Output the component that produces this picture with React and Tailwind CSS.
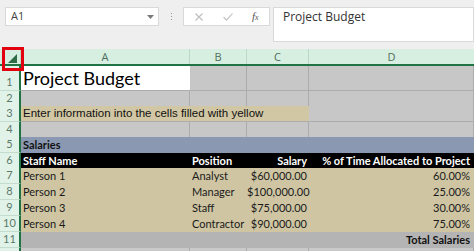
import React from "react";

const grid = "grid grid-cols-[21px_169px_57px_62px_1fr]";
const cellFont = { fontFamily: "Lato, 'Open Sans', sans-serif" };

const RowHead = ({ n }) => (
  <div className="flex items-end justify-center bg-[#e1f3e9] border-r-2 border-b border-r-[#217346] border-b-[#c3dccd] text-[11px] leading-[14px] text-[#5c7868] pb-px">
    {n}
  </div>
);

const GrayCell = ({ className = "" }) => (
  <div className={`bg-[#c7c7c7] border-r border-b border-[#acacac] ${className}`} />
);

const Row = ({ n, h, children }) => (
  <div className={grid} style={{ height: h }}>
    <RowHead n={n} />
    {children}
  </div>
);

const people = [
  ["Person 1", "Analyst", "$60,000.00", "60.00%"],
  ["Person 2", "Manager", "$100,000.00", "25.00%"],
  ["Person 3", "Staff", "$75,000.00", "30.00%"],
  ["Person 4", "Contractor", "$90,000.00", "75.00%"],
];

export default function App() {
  return (
    <div className="relative w-[474px] h-[251px] overflow-hidden bg-white" style={{ fontFamily: "'Open Sans', sans-serif" }}>
      {/* formula bar */}
      <div className="h-[49px] bg-[#efefef] flex items-start pt-[7px]">
        <div className="ml-[5px] w-[154px] h-[19px] bg-white border border-[#d9d9d9] flex items-center justify-between pl-[5px] pr-[4px]">
          <span className="text-[11px] text-[#444]">A1</span>
          <svg width="7" height="4" viewBox="0 0 7 4"><path d="M0 0h7L3.5 4z" fill="#7a7a7a" /></svg>
        </div>
        <div className="w-[24px] h-[19px] flex flex-col items-center justify-center gap-[2px]">
          <span className="w-px h-px bg-[#9a9a9a]" />
          <span className="w-px h-px bg-[#9a9a9a]" />
          <span className="w-px h-px bg-[#9a9a9a]" />
        </div>
        <div className="w-[87px] h-[19px] bg-white border border-[#d9d9d9] flex items-center">
          <svg className="ml-[11px]" width="8" height="8" viewBox="0 0 8 8">
            <path d="M0.5 0.5l7 7M7.5 0.5l-7 7" stroke="#bdbdbd" strokeWidth="1.1" />
          </svg>
          <svg className="ml-[20px]" width="10" height="8" viewBox="0 0 10 8">
            <path d="M0.5 4.2l3 3 6-6.7" stroke="#bdbdbd" strokeWidth="1.1" fill="none" />
          </svg>
          <span className="ml-[19px] text-[11px] leading-none text-[#555]" style={{ fontFamily: "'Liberation Serif', serif" }}>
            <i>f</i>
            <i className="text-[8px]">x</i>
          </span>
        </div>
        <div className="ml-[3px] flex-1 h-[35px] bg-white border border-[#d9d9d9] pl-[9px] pt-[2px] text-[12px] leading-[14px] text-[#333]">
          Project Budget
        </div>
      </div>

      {/* column headers */}
      <div className={`${grid} h-[17px] bg-[#d7efe1] border-b-2 border-[#217346] text-[11px] leading-[15px] text-[#4e6e5b]`}>
        <div className="relative border-r border-[#bcd7c6]">
          <svg className="absolute left-[8px] top-[5px]" width="9" height="9" viewBox="0 0 9 9"><path d="M9 0v9H0z" fill="#2f6b46" /></svg>
        </div>
        <div className="text-center border-r border-[#bcd7c6]">A</div>
        <div className="text-center border-r border-[#bcd7c6]">B</div>
        <div className="text-center border-r border-[#bcd7c6]">C</div>
        <div className="text-center">D</div>
      </div>

      <div style={cellFont}>
        <Row n={1} h={25}>
          <div className="bg-white border-b border-[#acacac] text-[18px] leading-[24px] text-black pl-[2px]">Project Budget</div>
          <GrayCell />
          <GrayCell />
          <GrayCell />
        </Row>
        <Row n={2} h={15}>
          <GrayCell />
          <GrayCell />
          <GrayCell />
          <GrayCell />
        </Row>
        <Row n={3} h={16}>
          <div className="col-span-3 bg-[#d2c7a4] border-b border-[#acacac] text-[11.5px] leading-[15px] text-[#111] pl-[2px] whitespace-nowrap" style={{ fontFamily: "'Liberation Sans', Arial, sans-serif" }}>
            Enter information into the cells filled with yellow
          </div>
          <GrayCell />
        </Row>
        <Row n={4} h={15}>
          <GrayCell />
          <GrayCell />
          <GrayCell />
          <GrayCell />
        </Row>
        <Row n={5} h={16}>
          <div className="col-span-4 bg-[#8b98b2] text-[11px] leading-[16px] font-bold text-[#111] pl-[2px]">Salaries</div>
        </Row>
        <Row n={6} h={15}>
          <div className="col-span-4 grid grid-cols-[169px_57px_62px_1fr] bg-black text-white font-bold text-[11px] leading-[15px] whitespace-nowrap">
            <div className="pl-[2px]">Staff Name</div>
            <div className="pl-[2px]">Position</div>
            <div className="text-right pr-[2px]">Salary</div>
            <div className="text-right pr-[4px]">% of Time Allocated to Project</div>
          </div>
        </Row>
        {people.map((p, i) => (
          <Row key={p[0]} n={7 + i} h={16}>
            <div className="col-span-4 grid grid-cols-[169px_57px_62px_1fr] bg-[#cfc5a3] text-[#1a1a1a] text-[11px] leading-[16px] whitespace-nowrap">
              <div className="pl-[2px]">{p[0]}</div>
              <div className="pl-[2px]">{p[1]}</div>
              <div className="text-right pr-[2px]">{p[2]}</div>
              <div className="text-right pr-[4px]">{p[3]}</div>
            </div>
          </Row>
        ))}
        <Row n={11} h={16}>
          <div className="col-span-4 bg-[#b4b4b4] text-right pr-[4px] font-bold text-[11px] leading-[16px] text-[#111]">Total Salaries</div>
        </Row>
        <Row n="" h={16}>
          <GrayCell className="bg-[#c9c9c9]" />
          <GrayCell className="bg-[#c9c9c9]" />
          <GrayCell className="bg-[#c9c9c9]" />
          <GrayCell className="bg-[#c9c9c9]" />
        </Row>
      </div>

      {/* highlight around select-all corner */}
      <div className="absolute left-[2px] top-[47px] w-[22px] h-[24px] border-[3px] border-[#e3000f]" />
    </div>
  );
}
